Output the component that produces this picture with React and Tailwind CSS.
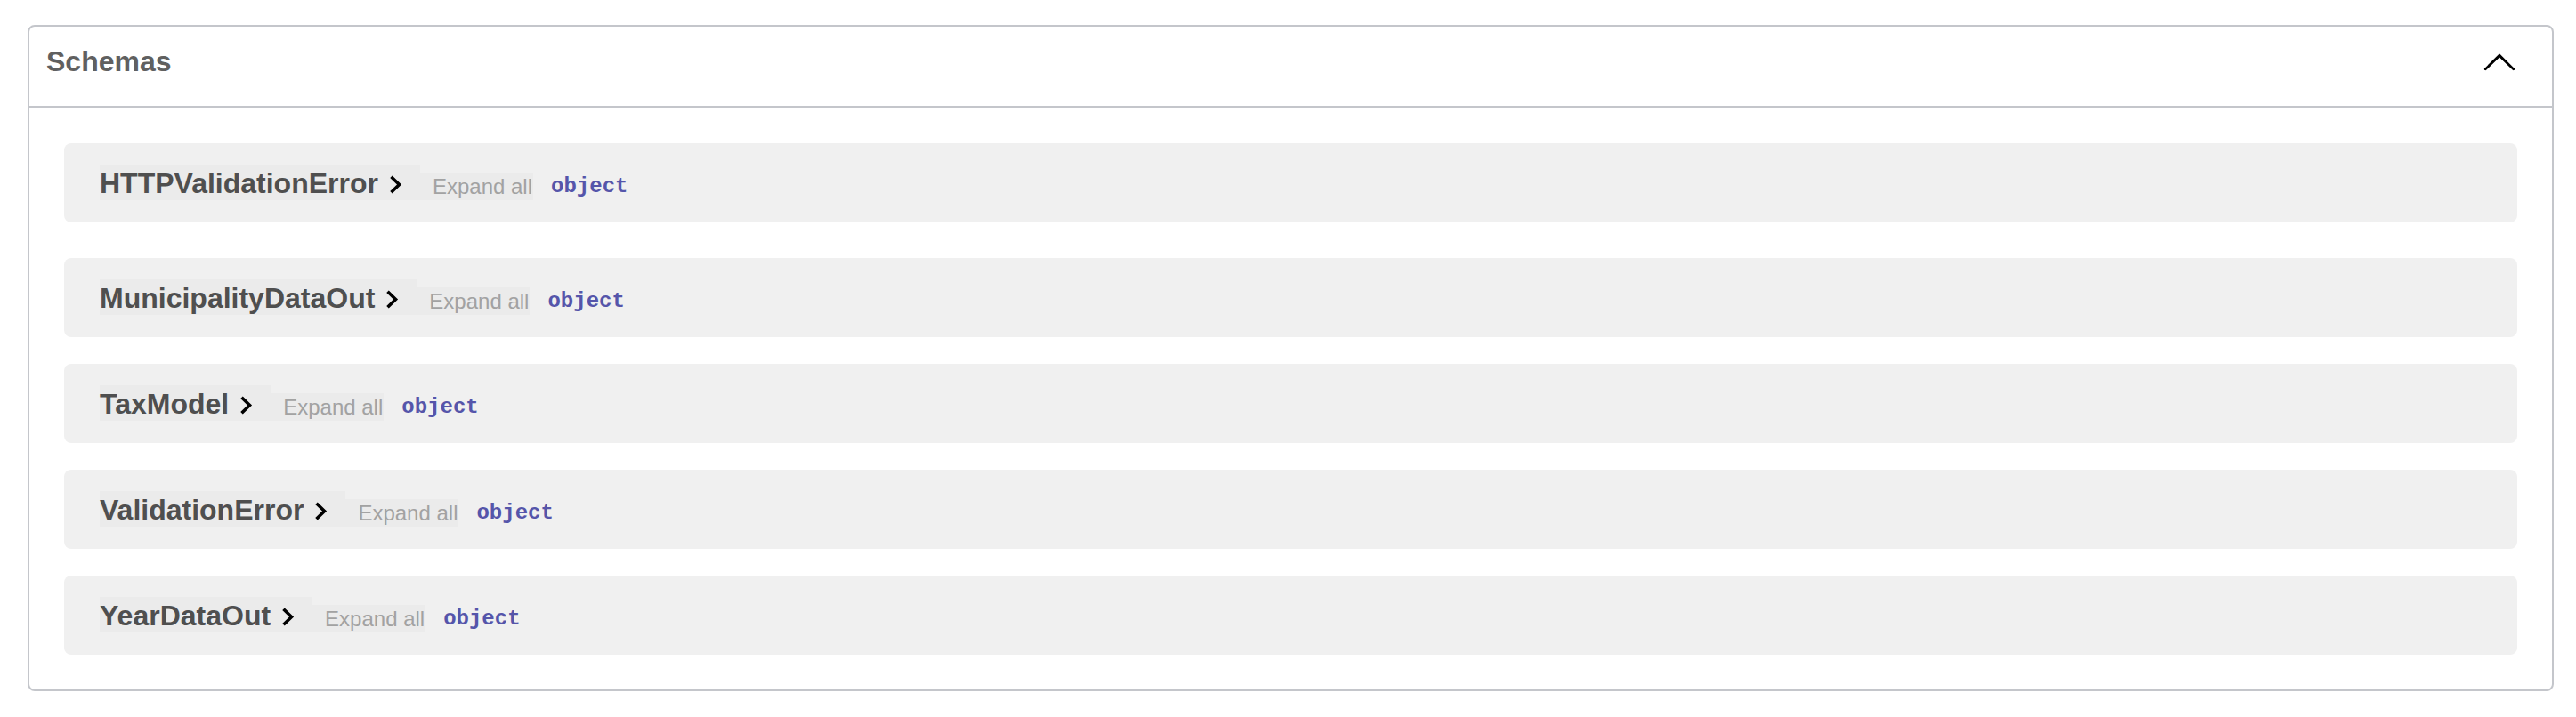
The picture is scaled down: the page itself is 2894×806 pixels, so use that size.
import React from 'react';

const schemas = [
  'HTTPValidationError',
  'MunicipalityDataOut',
  'TaxModel',
  'ValidationError',
  'YearDataOut'
];

const ArrowUp = () => (
  <svg width="40" height="40" viewBox="0 0 20 20" className="shrink-0">
    <path
      fill="#000"
      d="M17.418 14.908c.271.268.709.268.979 0s.271-.701 0-.969l-7.908-7.83c-.27-.268-.707-.268-.979 0l-7.908 7.83c-.27.268-.27.701 0 .969.271.268.709.268.978 0L10 7.717l7.418 7.191z"
    />
  </svg>
);

const ChevronRight = () => (
  <svg width="15" height="21" viewBox="0 0 15 21" className="shrink-0 ml-[12px] mt-[4px]">
    <polyline
      points="2.5,1.8 11.5,10.5 2.5,19.2"
      fill="none"
      stroke="#000"
      strokeWidth="3.6"
    />
  </svg>
);

const SchemaRow = ({ name, first }) => (
  <div
    className={`bg-[#f0f0f0] rounded-[8px] pl-[40px] pt-[24px] pb-[25px] flex items-end ${
      first ? 'mb-[40px]' : 'mb-[30px] last:mb-0'
    }`}
  >
    {/* Model toggle */}
    <div className="h-[40px] flex items-center bg-[#ebebeb] pr-[20px]">
      <span className="text-[32px] font-bold text-[#4f4f4f] mt-[2px]">{name}</span>
      <ChevronRight />
    </div>
    {/* Expand all */}
    <div className="h-[31px] flex items-center bg-[#ebebeb] pl-[14px] pr-[1px]">
      <span className="text-[24px] text-[#a2a2a2]">Expand all</span>
    </div>
    <div className="h-[31px] flex items-center ml-[20px]">
      <span className="text-[24px] font-bold text-[#5555aa] [font-family:'Liberation_Mono',monospace]">
        object
      </span>
    </div>
  </div>
);

export default function App() {
  return (
    <div className="bg-white min-h-[806px] pl-[31px] pr-[25px] pt-[28px] [font-family:'Liberation_Sans',Arial,sans-serif]">
      <section className="border-2 border-[#c4c6cb] rounded-[8px]">
        {/* Header */}
        <div className="h-[91px] border-b-2 border-[#c4c6cb] flex items-center justify-between pl-[19px] pr-[39px] pb-[11px]">
          <h4 className="text-[32px] leading-[32px] font-bold text-[#606060]">Schemas</h4>
          <ArrowUp />
        </div>
        {/* Models */}
        <div className="px-[39px] pt-[40px] pb-[39px]">
          {schemas.map((s, i) => (
            <SchemaRow key={s} name={s} first={i === 0} />
          ))}
        </div>
      </section>
    </div>
  );
}
